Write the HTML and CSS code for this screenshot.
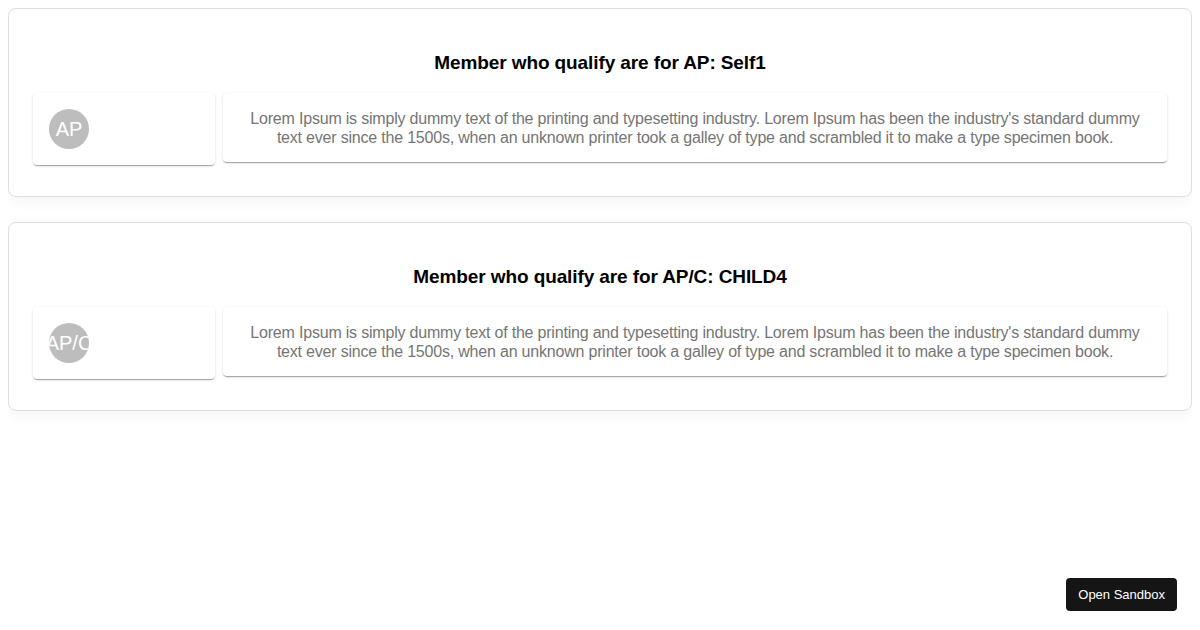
FILE: index.html
```html
<!DOCTYPE html>
<html lang="en">
<head>
    <meta charset="UTF-8">
    <meta name="viewport" content="width=device-width, initial-scale=1.0">
    <title>Members</title>
    <link rel="stylesheet" href="styles.css">
</head>
<body>
    <div class="member-card">
        <h2 class="member-title">Member who qualify are for AP: Self1</h2>
        <div class="member-row">
            <div class="paper paper-avatar">
                <div class="avatar">AP</div>
            </div>
            <div class="paper paper-text">
                Lorem Ipsum is simply dummy text of the printing and typesetting industry. Lorem Ipsum has been the industry's standard dummy text ever since the 1500s, when an unknown printer took a galley of type and scrambled it to make a type specimen book.
            </div>
        </div>
    </div>

    <div class="member-card">
        <h2 class="member-title">Member who qualify are for AP/C: CHILD4</h2>
        <div class="member-row">
            <div class="paper paper-avatar">
                <div class="avatar">AP/C</div>
            </div>
            <div class="paper paper-text">
                Lorem Ipsum is simply dummy text of the printing and typesetting industry. Lorem Ipsum has been the industry's standard dummy text ever since the 1500s, when an unknown printer took a galley of type and scrambled it to make a type specimen book.
            </div>
        </div>
    </div>

    <button class="sandbox-btn">Open Sandbox</button>
</body>
</html>
```

FILE: styles.css
```css
body{
    margin: 8px;
    font-family: "Liberation Sans", Arial, sans-serif;
    background: #fff;
}
/*外层卡片*/
.member-card{
    border: 1px solid #dddde6;
    border-radius: 8px;
    padding: 24px 24px 31px;
    margin-bottom: 25px;
    box-shadow: 0 4px 14px rgba(30, 30, 80, .05);
    background: #fff;
}
.member-title{
    margin: 19px 0 19px;
    font-size: 19px;
    line-height: 22px;
    letter-spacing: -0.1px;
    font-weight: bold;
    text-align: center;
    color: #000;
}
.member-row{
    display: flex;
    align-items: flex-start;
    gap: 8px;
}
.paper{
    background: #fff;
    border-radius: 4px;
    box-shadow: 0 2px 1px -1px rgba(0,0,0,.2), 0 1px 1px 0 rgba(0,0,0,.14), 0 1px 3px 0 rgba(0,0,0,.12);
}
.paper-avatar{
    width: 182px;
    flex: none;
    padding: 16px;
    box-sizing: border-box;
}
.avatar{
    width: 40px;
    height: 40px;
    border-radius: 50%;
    background: #bdbdbd;
    color: #fff;
    font-size: 20px;
    display: flex;
    align-items: center;
    justify-content: center;
    overflow: hidden;
    white-space: nowrap;
}
.paper-text{
    flex: 1;
    padding: 16px 16px 15px;
    font-size: 16px;
    line-height: 19px;
    letter-spacing: -0.2px;
    color: #757575;
    text-align: center;
}
/*右下角按钮*/
.sandbox-btn{
    position: fixed;
    right: 23px;
    bottom: 19px;
    height: 33px;
    padding: 0 12px;
    background: #151515;
    color: #fff;
    border: none;
    border-radius: 4px;
    font-family: "Liberation Sans", Arial, sans-serif;
    font-size: 13px;
    cursor: pointer;
}
```
